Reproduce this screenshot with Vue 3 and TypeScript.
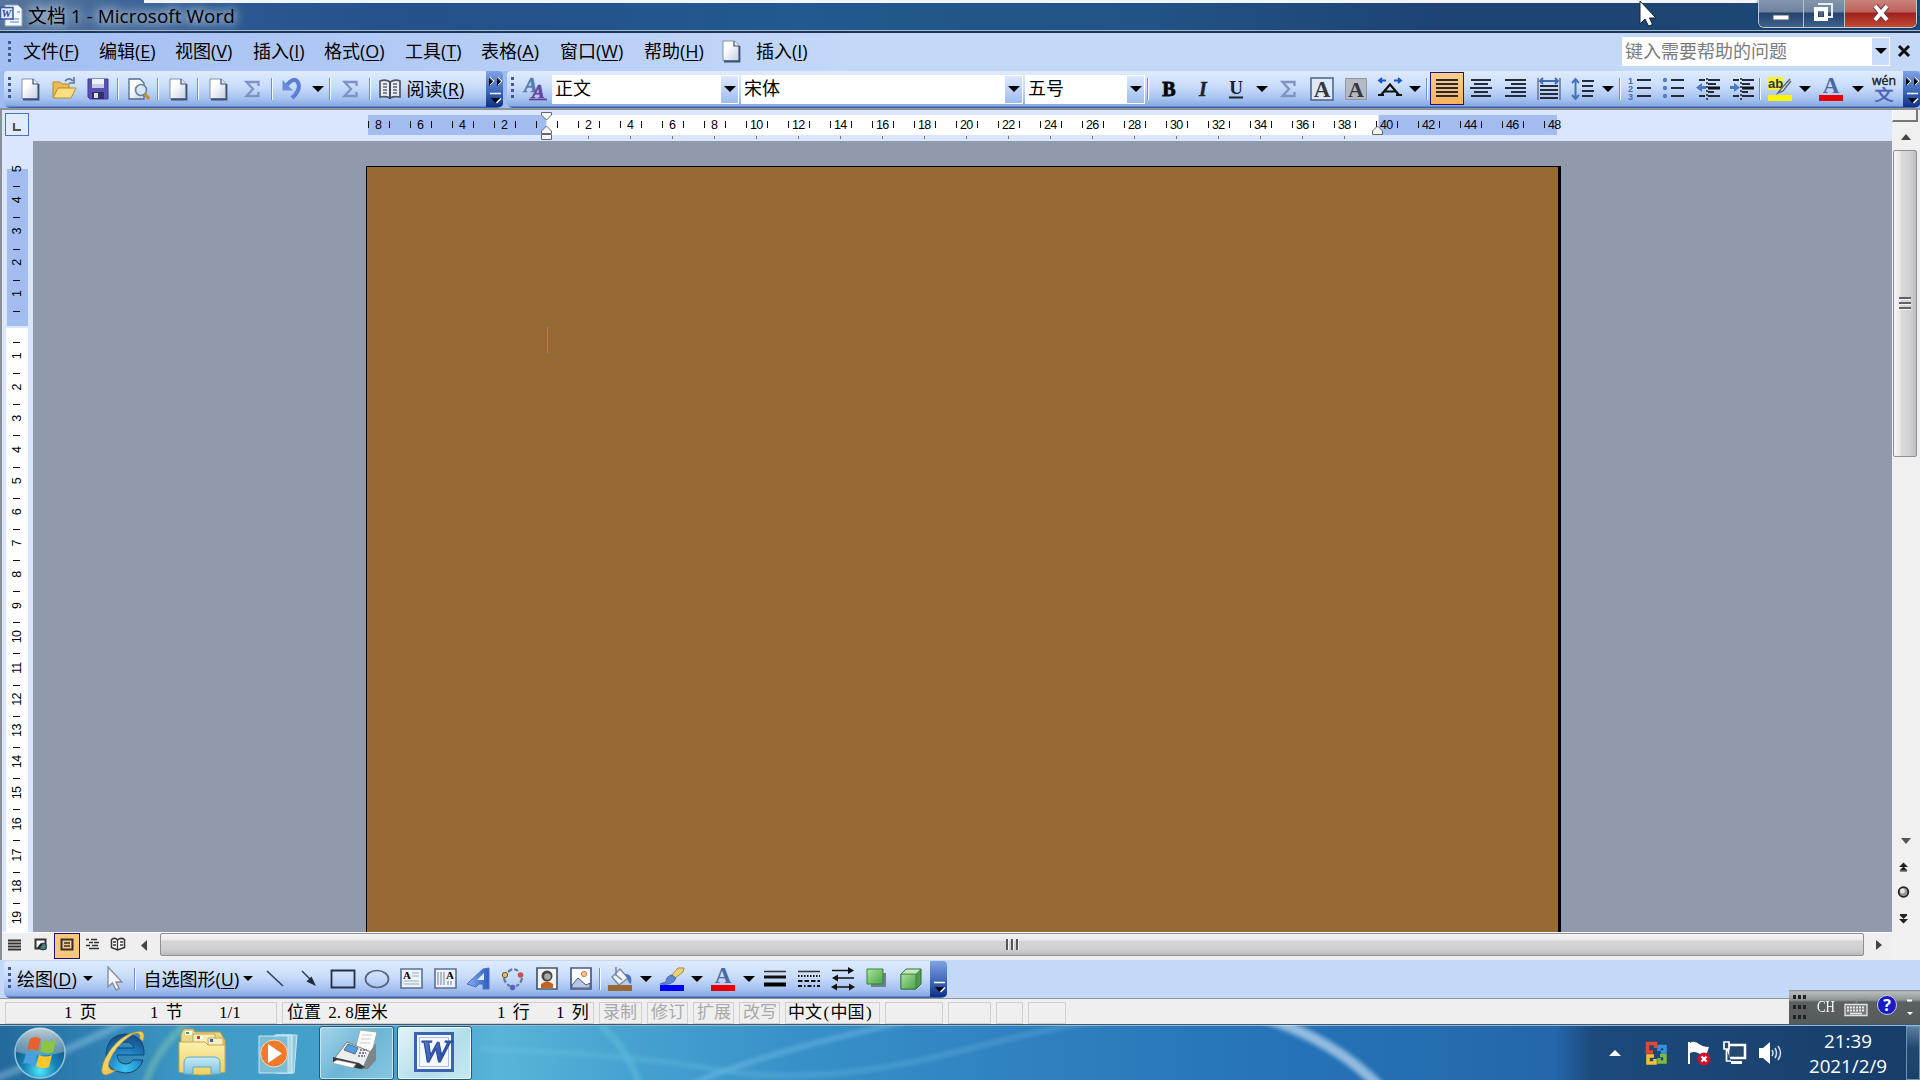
<script setup lang="ts">
interface Item {
  k: 'btn' | 'sep' | 'drop' | 'text' | 'combo' | 'gap'
  icon?: string
  w?: number
  t?: string
  key?: string
  on?: boolean
}

const sigma = '<path d="M18.500 9V5H6.500l6.500 7-6.500 7h12v-4" fill="none" stroke="#7f92c4" stroke-width="2.300"/>'
const page = '<path d="M4 2H15.500L20 6.500V21.500H4Z" fill="url(#paper)" stroke="#8391ad" stroke-width="1"/><path d="M20.500 7V22.500H5" fill="none" stroke="#3c5276" stroke-width="1.800"/><path d="M15 2V7H20" fill="#e4ebf6" stroke="#40506e" stroke-width="1.200"/>'
const rows = (a: number[][]) => a.map(r => `<path d="M${r[0]} ${r[1]}H${r[2]}" stroke="#222a3c" stroke-width="2"/>`).join('')
const serif = 'font-family="Liberation Serif, serif"'

const icons: Record<string, string> = {
  page,
  sigma,
  open: '<path d="M1 21V5H8L10 7H17V11" fill="#e9bd55" stroke="#b98a2c"/><path d="M1 21L6 11H24L19 21Z" fill="#fbdf82" stroke="#b98a2c"/><path d="M13 4Q17 0 21 4M22 0V6H17" fill="none" stroke="#5f7ba5" stroke-width="1.700"/>',
  save: '<path d="M2 2H22V22H4L2 20Z" fill="#5a50b4" stroke="#3b3b90"/><path d="M6 2H18V11H6Z" fill="#eef2fb"/><path d="M6 7H18V11H6Z" fill="#c4cbe4"/><path d="M6 15H18V22H6Z" fill="#2e3268"/><path d="M8 16H12V21H8Z" fill="#dce2f4"/>',
  preview: '<path d="M3 2H14L18 6V22H3Z" fill="url(#paper)" stroke="#54698e" stroke-width="1.300"/><circle cx="15" cy="13" r="5.500" fill="#d8e8f4" stroke="#68819c" stroke-width="1.600"/><path d="M19 17L23 22" stroke="#c98c35" stroke-width="3.500"/>',
  undo: '<path d="M7 8Q13 0 17.500 4.500Q22 12 12 21" fill="none" stroke="#5c7fd4" stroke-width="4"/><path d="M2.500 3V13.500H13Z" fill="#6b8cdb"/>',
  book: '<path d="M2 4Q8 2 12 5Q17 2 22 4V20Q16 19 12 21Q8 19 2 20Z" fill="#e8ebef" stroke="#4e5663" stroke-width="1.700"/><path d="M12 5V22" stroke="#3e4858" stroke-width="2"/><path d="M5 7H9M5 10H9M5 13H9M5 16H9M15 7H19M15 10H19M15 13H19M15 16H19" stroke="#5d6675" stroke-width="1.400"/>',
  styles: `<g font-weight="bold" font-style="italic" ${serif}><text x="1" y="15" font-size="20" fill="#567bb0" stroke="#567bb0" stroke-width=".6">A</text><text x="9" y="20.500" font-size="19" fill="#67459e" stroke="#67459e" stroke-width=".6">A</text></g><path d="M6 22.500H24" stroke="#67459e" stroke-width="1.800"/>`,
  bold: `<text x="13" y="18.500" text-anchor="middle" font-size="20" font-weight="bold" ${serif} stroke="#111" stroke-width=".9">B</text>`,
  italic: `<text x="13" y="18.500" text-anchor="middle" font-size="20" font-weight="bold" font-style="italic" ${serif} fill="#1b2333" stroke="#1b2333" stroke-width=".4">I</text>`,
  under: `<text x="12" y="17" text-anchor="middle" font-size="19" font-weight="bold" ${serif} fill="#1b2333">U</text><path d="M5 20.500H19" stroke="#1b2333" stroke-width="2"/>`,
  boxA: `<path d="M1 1H23V23H1Z" fill="#dde8f8" stroke="#4a6285" stroke-width="1.500"/><text x="12" y="20" text-anchor="middle" font-size="23" font-weight="bold" ${serif} fill="#34383f">A</text>`,
  shadeA: `<path d="M1.500 1.500H22.500V22.500H1.500Z" fill="#b5b9c1" stroke="#92969e"/><text x="12" y="20" text-anchor="middle" font-size="22" font-weight="bold" ${serif} fill="#34383f">A</text>`,
  scale: '<path d="M2 3.500H8M22 3.500H16M4 1L1 3.500L4 6M20 1L23 3.500L20 6" fill="none" stroke="#1655c8" stroke-width="1.800"/><path d="M3 18L12 7.500L21 18M6 14.500H18M0 18H6M18 18H24" fill="none" stroke="#111" stroke-width="2.200"/>',
  justify: rows([[1, 3, 23], [1, 7, 23], [1, 11, 23], [1, 15, 23], [1, 19, 23]]),
  center: rows([[2, 3, 22], [5, 7, 19], [1, 11, 23], [5, 15, 19], [2, 19, 22]]),
  right: rows([[2, 3, 23], [8, 7, 23], [2, 11, 23], [8, 15, 23], [2, 19, 23]]),
  dist: rows([[3, 9, 21], [3, 13, 21], [3, 17, 21], [3, 21, 21]]) + '<path d="M1 1V23M23 1V23" stroke="#657694" stroke-width="1.500"/><path d="M3 4H21M6 1L3 4L6 7M18 1L21 4L18 7" fill="none" stroke="#3f6bb9" stroke-width="2"/>',
  spacing: rows([[11, 4, 23], [11, 9, 22], [11, 14, 23], [11, 19, 22]]) + '<path d="M4.500 2V22M1 6L4.500 2L8 6M1 18L4.500 22L8 18" fill="none" stroke="#4773bd" stroke-width="2"/>',
  number: rows([[9, 3, 23], [9, 11, 23], [9, 19, 23]]) + '<g font-family="Liberation Sans, sans-serif" font-size="9" font-weight="bold" fill="#4c6cb0"><text x="0" y="7">1</text><text x="0" y="15">2</text><text x="0" y="23">3</text></g>',
  bullet: rows([[9, 3, 22], [9, 11, 22], [9, 19, 22]]) + '<g fill="#5a7cbc"><circle cx="3" cy="3" r="2.200"/><circle cx="3" cy="11" r="2.200"/><circle cx="3" cy="19" r="2.200"/></g>',
  outdent: rows([[3, 3, 9], [12, 3, 24], [12, 7, 20], [12, 15, 18], [3, 19, 9], [12, 19, 24]]) + '<path d="M12 11H24" stroke="#111" stroke-width="3"/><path d="M11 1V23" stroke="#222" stroke-width="1.500" stroke-dasharray="2 2"/><path d="M0 10.500L6 6V9H10V12H6V15Z" fill="#4b78c8"/>',
  indent: rows([[3, 3, 9], [12, 3, 24], [12, 7, 20], [12, 15, 18], [3, 19, 9], [12, 19, 24]]) + '<path d="M12 11H24" stroke="#111" stroke-width="3"/><path d="M11 1V23" stroke="#222" stroke-width="1.500" stroke-dasharray="2 2"/><path d="M10 10.500L4 6V9H0V12H4V15Z" fill="#4b78c8"/>',
  hilite: '<path d="M0 0H15V13H0Z" fill="#f2f23d"/><text x="0" y="11" font-size="13" font-family="Liberation Sans, sans-serif" font-weight="bold" fill="#333">ab</text><path d="M22 2L13 12L10 16L15 14L23 4" fill="#e8e8e8" stroke="#5d6674" stroke-width="1.500"/><path d="M0 18H24V24H0Z" fill="#fff500"/>',
  fontcolor: `<text x="12" y="16" text-anchor="middle" font-size="23" font-weight="bold" ${serif} fill="#48689e">A</text><path d="M0 18H24V24H0Z" fill="#e60000"/>`,
  pinyin: '<text x="12" y="8" text-anchor="middle" font-size="12" font-family="Open Sans, sans-serif" fill="#222" stroke="#222" stroke-width=".4" textLength="24" lengthAdjust="spacingAndGlyphs">wén</text><text x="12" y="22.500" text-anchor="middle" font-size="15" font-family="Noto Sans CJK SC, sans-serif" fill="#4b62b8" stroke="#4b62b8" stroke-width=".6" textLength="19" lengthAdjust="spacingAndGlyphs">文</text>',
  cursor: '<path d="M6 0V20L10.500 16L14 23L17 21.500L14 15H20Z" fill="#f3f4f7" stroke="#858da0" stroke-width="1.400"/>',
  line: '<path d="M4 4L20 19" stroke="#31435e" stroke-width="1.700"/>',
  arrow: '<path d="M5 4L15 14" stroke="#31435e" stroke-width="1.500"/><path d="M19 19L9.500 14.500L14.500 9.500Z" fill="#222c3e"/>',
  rect: '<path d="M.5 3.500H23.500V20.500H.5Z" fill="none" stroke="#223048" stroke-width="1.800"/>',
  oval: '<ellipse cx="12" cy="12" rx="11.500" ry="8.500" fill="none" stroke="#56647c" stroke-width="1.700"/>',
  textbox: `<path d="M2 2H23V21H2Z" fill="#eef3fb" stroke="#5b7193" stroke-width="1.600"/><text x="4" y="12" font-size="11" font-weight="bold" ${serif}>A</text><path d="M13 6H20M13 9H20M5 14H20M5 17H20" stroke="#98a9c4" stroke-width="1.200"/>`,
  vtext: `<path d="M2 2H23V21H2Z" fill="#eef3fb" stroke="#5b7193" stroke-width="1.600"/><text x="13" y="12" font-size="11" font-weight="bold" ${serif}>A</text><path d="M5 5V18M8 5V18M11 5V18M15 14V18M18 14V18" stroke="#8395b3" stroke-width="1.200"/>`,
  wordart: '<path d="M0 17L16 2L22 1V22H16V17H12L9 20Z" fill="url(#blueA)" stroke="#4a6fc0"/><path d="M17 6L10 13H17Z" fill="#dfe9fb"/>',
  diagram: '<path d="M7 5Q12 0 17 4M21 11Q20 17 15 19M3 11Q4 17 9 19" fill="none" stroke="#62799b" stroke-width="2.200" stroke-dasharray="5 2"/><circle cx="4" cy="8" r="2.700" fill="#d3be5b" stroke="#67613f"/><circle cx="19.500" cy="8" r="2.800" fill="#c95050"/><circle cx="11.500" cy="20.500" r="2.800" fill="#5963c4"/>',
  clipart: '<path d="M2 1H22V22H2Z" fill="#f3f3f3" stroke="#455875" stroke-width="1.700"/><circle cx="12" cy="9" r="5.500" fill="#444"/><circle cx="12.500" cy="9.500" r="3.300" fill="#aaa"/><path d="M6 21V17Q12 12 18 17V21Z" fill="#c4611d"/>',
  picture: '<path d="M2 1H22V22H2Z" fill="#fafcff" stroke="#455c83" stroke-width="1.700"/><circle cx="15" cy="7" r="2.600" fill="#ffc28c" stroke="#df7b36"/><path d="M3 18L9 11L17 18L21 16V21H3Z" fill="#b9c6e4" stroke="#45587a"/>',
  bucket: '<path d="M4 10L12 2L20 11L11 18Z" fill="#f0f4fa" stroke="#7887a2" stroke-width="1.400"/><path d="M8 9V0M8 8L14 13" stroke="#7887a2" stroke-width="1.500"/><path d="M17 7Q25 6 23 17Q20 16 19 11Z" fill="#4e75ba"/><path d="M0 18H24V24H0Z" fill="#976933"/>',
  brush: '<path d="M24 1L18 1L11 9L14 12L23 5Z" fill="#f0d070" stroke="#a88a44"/><path d="M12 8Q6 9 6 15L0 17Q13 19 16 11Z" fill="#5e86ce" stroke="#466bb0"/><path d="M0 18H24V24H0Z" fill="#0000f2"/>',
  weight: '<path d="M1 4.500H23" stroke="#333" stroke-width="1.500"/><path d="M1 10H23" stroke="#111" stroke-width="3"/><path d="M1 17.500H23" stroke="#000" stroke-width="4"/>',
  dash: '<path d="M1 4.500H23" stroke="#333" stroke-width="1.500"/><path d="M1 9H23" stroke="#111" stroke-width="2" stroke-dasharray="1.500 1.500"/><path d="M1 14H23" stroke="#111" stroke-width="2" stroke-dasharray="4.500 2"/><path d="M1 19H23" stroke="#111" stroke-width="2" stroke-dasharray="4 2 1.500 2"/>',
  arrows: '<path d="M1 3.500H21M4 11H23M3 20H21" stroke="#111" stroke-width="1.500"/><path d="M23 3.500L17 0V7ZM1 11L7 7.500V14.500ZM0 20L6 16.500V23.500ZM24 20L18 16.500V23.500Z" fill="#111"/>',
  shadow: '<path d="M6 6H21V20H6Z" fill="#6f8190"/><path d="M2 2H18V17H2Z" fill="url(#green)" stroke="#36833b"/>',
  cube: '<path d="M2 7L7 2H22V17L17 22H2Z" fill="#4e9c50" stroke="#356f3a"/><path d="M2 7H17V22H2Z" fill="url(#green)" stroke="#3c7c40"/><path d="M3 6.500L7 2.500H21L17 6.500Z" fill="#c7e8b9"/>',
}

const standard: Item[] = [
  { k: 'btn', icon: 'page' }, { k: 'btn', icon: 'open' }, { k: 'btn', icon: 'save' }, { k: 'sep' },
  { k: 'btn', icon: 'preview' }, { k: 'sep' }, { k: 'btn', icon: 'page' }, { k: 'sep' },
  { k: 'btn', icon: 'page' }, { k: 'btn', icon: 'sigma' }, { k: 'sep' },
  { k: 'btn', icon: 'undo' }, { k: 'drop' }, { k: 'sep' }, { k: 'btn', icon: 'sigma' }, { k: 'sep' },
  { k: 'btn', icon: 'book' }, { k: 'text', t: '阅读', key: 'R', w: 78 },
]
const format: Item[] = [
  { k: 'gap', w: 1 }, { k: 'btn', icon: 'styles' }, { k: 'combo', t: '正文', w: 187 }, { k: 'gap', w: 2 },
  { k: 'combo', t: '宋体', w: 282 }, { k: 'gap', w: 2 }, { k: 'combo', t: '五号', w: 120 }, { k: 'sep' },
  { k: 'btn', icon: 'bold' }, { k: 'btn', icon: 'italic' }, { k: 'btn', icon: 'under' }, { k: 'drop' },
  { k: 'btn', icon: 'sigma' }, { k: 'btn', icon: 'boxA' }, { k: 'btn', icon: 'shadeA' }, { k: 'btn', icon: 'scale' },
  { k: 'drop' }, { k: 'sep' }, { k: 'btn', icon: 'justify', on: true }, { k: 'btn', icon: 'center' },
  { k: 'btn', icon: 'right' }, { k: 'btn', icon: 'dist' }, { k: 'btn', icon: 'spacing' }, { k: 'gap', w: -1 }, { k: 'drop' }, { k: 'sep' },
  { k: 'btn', icon: 'number' }, { k: 'btn', icon: 'bullet' }, { k: 'btn', icon: 'outdent' }, { k: 'btn', icon: 'indent' },
  { k: 'gap', w: -2 }, { k: 'sep' }, { k: 'btn', icon: 'hilite' }, { k: 'drop' }, { k: 'btn', icon: 'fontcolor' }, { k: 'gap', w: 1 }, { k: 'drop' },
  { k: 'btn', icon: 'pinyin' },
]
const drawing: Item[] = [
  { k: 'text', t: '绘图', key: 'D', w: 62 }, { k: 'drop' }, { k: 'btn', icon: 'cursor' }, { k: 'gap', w: 1 }, { k: 'sep' }, { k: 'gap', w: 6 },
  { k: 'text', t: '自选图形', key: 'U', w: 96 }, { k: 'drop' }, { k: 'gap', w: 1 },
  { k: 'btn', icon: 'line' }, { k: 'btn', icon: 'arrow' }, { k: 'btn', icon: 'rect' }, { k: 'btn', icon: 'oval' },
  { k: 'btn', icon: 'textbox' }, { k: 'btn', icon: 'vtext' }, { k: 'btn', icon: 'wordart' }, { k: 'btn', icon: 'diagram' },
  { k: 'btn', icon: 'clipart' }, { k: 'btn', icon: 'picture' }, { k: 'gap', w: -1 }, { k: 'sep' }, { k: 'btn', icon: 'bucket' }, { k: 'drop' },
  { k: 'btn', icon: 'brush' }, { k: 'drop' }, { k: 'btn', icon: 'fontcolor' }, { k: 'drop' },
  { k: 'btn', icon: 'weight' }, { k: 'btn', icon: 'dash' }, { k: 'btn', icon: 'arrows' }, { k: 'btn', icon: 'shadow' }, { k: 'btn', icon: 'cube' },
]
const bars = { standard, format }

const menus = [
  { t: '文件', key: 'F', w: 76 }, { t: '编辑', key: 'E', w: 76 }, { t: '视图', key: 'V', w: 78 },
  { t: '插入', key: 'I', w: 71 }, { t: '格式', key: 'O', w: 81 }, { t: '工具', key: 'T', w: 76 },
  { t: '表格', key: 'A', w: 79 }, { t: '窗口', key: 'W', w: 84 }, { t: '帮助', key: 'H', w: 75 },
]

const unit = 21
const zeroX = 546.300
const hLabels: { x: number; n: number }[] = []
for (let n = -8; n <= 48; n += 2) if (n !== 0) hLabels.push({ x: zeroX + n * unit, n: Math.abs(n) })
const hTicks: number[] = []
for (let n = -9; n < 48; n++) if (n + 0.5 > -8.6) hTicks.push(Math.floor(zeroX + 0.5 + (n + 0.5) * unit) + 0.5)
const tabTicks = Array.from({ length: 19 }, (_, i) => Math.floor(zeroX + (i + 1) * 2 * unit) + 0.5)

const vLabels: { y: number; n: number }[] = []
for (let n = -5; n <= 19; n++) if (n !== 0) vLabels.push({ y: 184 + n * 31.2, n: Math.abs(n) })
const vTicks: number[] = []
for (let n = -5; n < 19; n++) vTicks.push(Math.floor(185.900 + (n + 0.5) * 31.15) + 0.5)
</script>

<template>
  <div class="screen">
    <svg class="defs" width="0" height="0">
      <defs>
        <linearGradient id="paper" x2="1" y2="1"><stop offset=".3" stop-color="#fff" /><stop offset="1" stop-color="#c3cee2" /></linearGradient>
        <linearGradient id="blueA" x2="1"><stop stop-color="#86b2f2" /><stop offset="1" stop-color="#2c5cc0" /></linearGradient>
        <linearGradient id="green" x2="1" y2="1"><stop stop-color="#b0e29c" /><stop offset="1" stop-color="#46a44b" /></linearGradient>
        <radialGradient id="orb" cy=".85" r=".8"><stop stop-color="#4fe6ff" /><stop offset=".4" stop-color="#1685b8" /><stop offset="1" stop-color="#123f66" /></radialGradient>
        <linearGradient id="gloss" x2="0" y2="1"><stop stop-color="#fff" stop-opacity=".75" /><stop offset="1" stop-color="#bcd0de" stop-opacity=".35" /></linearGradient>
        <radialGradient id="ie" cy=".9" r=".9"><stop stop-color="#3cc6f4" /><stop offset=".6" stop-color="#1a7ac0" /><stop offset="1" stop-color="#174a80" /></radialGradient>
        <linearGradient id="folder" x2="0" y2="1"><stop stop-color="#fbf0ae" /><stop offset="1" stop-color="#ecd261" /></linearGradient>
        <linearGradient id="glass" x2="0" y2="1"><stop stop-color="#c7e9f6" /><stop offset="1" stop-color="#7fc3e2" /></linearGradient>
        <linearGradient id="ring" x2="1" y2="1"><stop stop-color="#f8f0a0" /><stop offset="1" stop-color="#e3a417" /></linearGradient>
        <linearGradient id="wblue" x2="1" y2="1"><stop stop-color="#5d86d2" /><stop offset="1" stop-color="#1d3c92" /></linearGradient>
      </defs>
    </svg>

    <header class="title">
      <svg class="app-icon" viewBox="0 0 24 24"><path d="M5 1H18L22 5V22H5Z" fill="#f5f8fd" stroke="#8fa0bb" /><path d="M17 8H20M10 15H19M10 18H19" stroke="#8daad8" stroke-width="1.500" /><path d="M.5 3.500H13V15H.5Z" fill="#dfe8f8" stroke="#375aa5" stroke-width="1.500" /><text x="6.500" y="13" text-anchor="middle" font-size="11" font-weight="bold" font-style="italic" font-family="Liberation Serif, serif" fill="#274c9c">W</text></svg>
      <span class="title-text">文档 1 - Microsoft Word</span>
      <div class="strip"></div>
      <div class="caption">
        <span class="cap min"><svg viewBox="0 0 44 26"><path d="M14 15H30V20H14Z" fill="#fff" stroke="#465a74" /></svg></span>
        <span class="cap max"><svg viewBox="0 0 40 26"><path d="M14 4H28V17H24" fill="none" stroke="#e8edf3" stroke-width="2" /><path d="M12 9H22V19H12Z" fill="none" stroke="#fff" stroke-width="4" /><path d="M15 12H19V16H15Z" fill="#52637c" /></svg></span>
        <span class="cap close"><svg viewBox="0 0 72 26"><path d="M30 6L42 20M42 6L30 20" stroke="#6a3b42" stroke-width="6" /><path d="M30 6L42 20M42 6L30 20" stroke="#fff" stroke-width="4" /></svg></span>
      </div>
    </header>

    <nav class="menu">
      <i class="grip"></i>
      <span v-for="m in menus" :key="m.key" class="menu-item" :style="{ width: m.w + 'px' }">{{ m.t }}(<u>{{ m.key }}</u>)</span>
      <svg class="menu-page" viewBox="0 0 24 24" v-html="icons.page"></svg>
      <span class="menu-item">插入(<u>I</u>)</span>
      <div class="ask"><span>键入需要帮助的问题</span><b class="ask-drop"><i class="tri"></i></b></div>
      <svg class="menu-x" viewBox="0 0 14 12"><path d="M2 1L12 11M12 1L2 11" stroke="#111" stroke-width="3" /></svg>
    </nav>

    <div class="bars">
      <section v-for="(items, name) in bars" :key="name" :class="['bar', name]">
        <i class="grip"></i>
        <template v-for="(it, i) in items" :key="i">
          <span v-if="it.k === 'btn'" :class="['btn', { on: it.on }]"><svg viewBox="0 0 24 24" v-html="icons[it.icon!]"></svg></span>
          <i v-else-if="it.k === 'sep'" class="sep"></i>
          <span v-else-if="it.k === 'drop'" class="drop"><i class="tri"></i></span>
          <i v-else-if="it.k === 'gap'" :style="{ marginLeft: it.w + 'px' }"></i>
          <span v-else-if="it.k === 'combo'" class="combo" :style="{ width: it.w + 'px' }"><span>{{ it.t }}</span><b><i class="tri"></i></b></span>
          <span v-else class="label" :style="{ width: it.w + 'px' }">{{ it.t }}(<u>{{ it.key }}</u>)</span>
        </template>
        <span class="end">
          <svg viewBox="0 0 17 36"><path d="M3 7L7 11L3 15ZM11 7L15 11L11 15Z" fill="#000" /><path d="M4 6L8 10L4 14M12 6L16 10L12 14" stroke="#fff" stroke-width="1" fill="none" /><path d="M4 22.500H15" stroke="#fff" stroke-width="1.500" /><path d="M5 27H14L9.500 32Z" fill="#000" /><path d="M15 27.500L10.500 32" stroke="#fff" stroke-width="1.500" /></svg>
        </span>
      </section>
    </div>

    <main class="work">
      <div class="hrow">
        <svg class="hruler" width="1890" height="31">
          <rect x="3.500" y="3.500" width="23" height="22" fill="#e2ebfb" stroke="#4a71bd" />
          <path d="M12 12V19H19" transform="translate(0 1)" fill="none" stroke="#555" stroke-width="2.200" />
          <rect x="366" y="5" width="178" height="20" fill="#a3bdf1" />
          <rect x="545" y="5" width="831" height="20" fill="#fff" />
          <rect x="1377" y="5" width="178" height="20" fill="#a3bdf1" />
          <g transform="translate(-2 0)">
            <path v-for="x in hTicks" :key="x" :d="`M${x} 11V18`" stroke="#111" />
            <path v-for="x in tabTicks" :key="x" :d="`M${x} 26V29`" stroke="#777" />
            <text v-for="l in hLabels" :key="l.x" :x="l.x" y="19" text-anchor="middle" class="num">{{ l.n }}</text>
            <path d="M541.500 2.500H551.500V5L546.500 10L541.500 5Z" fill="#f6f6f6" stroke="#666" />
            <path d="M541.500 23.500V21L546.500 16L551.500 21V23.500ZM541.500 24.500H551.500V29.500H541.500Z" fill="#f6f6f6" stroke="#666" />
            <path d="M1372.500 24.500V21L1377.500 16L1382.500 21V24.500Z" fill="#f6f6f6" stroke="#666" />
          </g>
        </svg>
      </div>
      <div class="mid">
        <svg class="vruler" width="31" height="791">
          <rect x="5" y="28" width="21" height="157" fill="#a3bdf1" />
          <rect x="4" y="187" width="22" height="604" fill="#fff" />
          <path v-for="y in vTicks" :key="y" :d="`M11 ${y}H18`" stroke="#111" />
          <text v-for="l in vLabels" :key="l.y" :transform="`translate(19 ${l.y}) rotate(-90)`" text-anchor="middle" class="num">{{ l.n }}</text>
        </svg>
        <div class="canvas"><div class="paper"><i class="caret"></i></div></div>
      </div>
      <div class="hscroll">
        <svg class="views" width="131" height="27">
          <path d="M6 7.500H19M6 10.500H19M6 13.500H19M6 16.500H19" stroke="#333" stroke-width="1.900" />
          <path d="M33.500 6.500H43.500V15.500H33.500Z" fill="#fff" stroke="#333" stroke-width="2" /><circle cx="41" cy="13.500" r="3.500" fill="#477f73" stroke="#1f2f63" /><path d="M36 15L40 11" stroke="#222" stroke-width="2" />
          <rect x="52.500" y=".5" width="25" height="25" fill="#fcc77d" stroke="#17107d" /><path d="M59.500 6.500H70.500V16.500H59.500Z" fill="none" stroke="#333" stroke-width="2" /><path d="M62 10H68M62 13H68" stroke="#333" stroke-width="1.500" />
          <path d="M84 6.500H87M89 6.500H95M87 9.500H91M92 9.500H97M84 12.500H88M90 12.500H96M87 15.500H97" stroke="#333" stroke-width="1.700" />
          <path d="M109.500 6.500Q113 4 115.500 7Q119 4 122.500 6.500V14.500L115.500 17L109.500 14.500Z" fill="#fff" stroke="#333" stroke-width="1.500" /><path d="M115.500 7V17M111 9H114M111 12H114M118 9H121M118 12H121" stroke="#333" stroke-width="1.300" />
          <path d="M145 7V18L139 12.500Z" fill="#444" />
        </svg>
        <span class="harrow l"></span>
        <span class="hthumb"><i v-for="n in 3" :key="n"></i></span>
        <span class="harrow"><i class="rarr"></i></span>
      </div>
      <aside class="vscroll">
        <i class="split"></i>
        <span class="varrow"><i class="uarr"></i></span>
        <span class="vthumb"><i v-for="n in 3" :key="n"></i></span>
        <span class="varrow d"><i class="darr"></i></span>
        <svg width="28" height="107">
          <path d="M11.500 9.500L16 14H7ZM11.500 13.500L15.500 17.500H7.500Z" fill="#222" /><path d="M8 18H15" stroke="#222" />
          <circle cx="11.500" cy="39" r="4.800" fill="#999" stroke="#222" stroke-width="1.800" /><circle cx="10.500" cy="38" r="2.400" fill="#e6e6e6" />
          <path d="M7.500 62H15.500L11.500 66ZM7 66H16L11.500 70.500Z" fill="#222" /><path d="M8 61.500H15" stroke="#222" />
        </svg>
      </aside>
    </main>

    <div class="drawrow">
      <section class="bar drawing">
        <i class="grip"></i>
        <template v-for="(it, i) in drawing" :key="i">
          <span v-if="it.k === 'btn'" class="btn"><svg viewBox="0 0 24 24" v-html="icons[it.icon!]"></svg></span>
          <i v-else-if="it.k === 'sep'" class="sep"></i>
          <span v-else-if="it.k === 'drop'" class="drop"><i class="tri"></i></span>
          <i v-else-if="it.k === 'gap'" :style="{ marginLeft: it.w + 'px' }"></i>
          <span v-else class="label" :style="{ width: it.w + 'px' }">{{ it.t }}(<u>{{ it.key }}</u>)</span>
        </template>
        <span class="end"><svg viewBox="0 0 17 36"><path d="M4 21.500H15" stroke="#fff" stroke-width="1.500" /><path d="M5 26H14L9.500 31Z" fill="#000" /><path d="M15 26.500L10.500 31" stroke="#fff" stroke-width="1.500" /></svg></span>
      </section>
    </div>

    <footer class="status">
      <span class="cell c1"><em class="p1">1 页</em><em class="p2">1 节</em><em class="p3">1/1</em></span>
      <span class="cell c2"><em class="q1">位置 2<s>.</s>8厘米</em><em class="q2">1 行</em><em class="q3">1 列</em></span>
      <span class="cell c3 dim">录制</span><span class="cell c4 dim">修订</span><span class="cell c4 dim">扩展</span><span class="cell c4 dim">改写</span>
      <span class="cell c5">中文<s>(</s>中国<s>)</s></span>
      <span class="cell c6"></span><span class="cell c7"></span><span class="cell c8"></span><span class="cell c9"></span>
    </footer>

    <div class="lang">
      <i class="dots"></i>
      <span class="ch">CH</span>
      <svg class="kbd" viewBox="0 0 24 20"><path d="M12 6Q13 2 17 3T22 0" fill="none" stroke="#8c9094" /><path d="M1 7.500H23V18.500H1Z" fill="#777b7c" stroke="#dfe3e4" stroke-width="1.300" /><path d="M3 10.500H21M3 13.500H21" stroke="#e9eded" stroke-width="2" stroke-dasharray="2 1" /><path d="M6 16.500H18" stroke="#e9eded" stroke-width="1.500" /></svg>
      <span class="help">?</span>
      <svg class="lend" viewBox="0 0 8 20"><path d="M1 3.500H6" stroke="#fff" stroke-width="2" /><path d="M1 15H7L4 18Z" fill="#fff" /></svg>
    </div>

    <div class="taskbar">
      <svg class="wall" width="1920" height="55">
        <g fill="none" filter="blur(2px)" opacity=".55">
          <path d="M-10 55Q60 30 130 -5" stroke="#a6d4ee" stroke-width="8" opacity=".7" />
          <path d="M145 60Q155 25 190 -5" stroke="#a8e4a8" stroke-width="7" opacity=".6" />
          <path d="M480 24Q620 28 720 45T960 26T1100 0" stroke="#7fd0ea" stroke-width="5" opacity=".5" />
          <path d="M690 60Q760 28 905 -3" stroke="#8ecdf0" stroke-width="5" opacity=".7" />
          <path d="M600 0Q625 20 640 60" stroke="#73d0e4" stroke-width="7" opacity=".6" />
          <path d="M1262 -8Q1335 15 1380 62" stroke="#cdeaff" stroke-width="11" />
          <path d="M1266 -7Q1335 17 1376 60" stroke="#f4fbff" stroke-width="6" />
        </g>
      </svg>
      <svg class="ic start" viewBox="0 0 54 54"><circle cx="27" cy="27" r="25" fill="url(#orb)" stroke="#93c5de" stroke-width="1.500" /><path d="M3 26A24 24 0 0 1 51 26Q27 33 3 26Z" fill="url(#gloss)" /><path d="M17 13Q22 9 28 13L25 25Q20 22 14 24Z" fill="#e8602c" /><path d="M30 14Q36 17 43 14L40 26Q34 29 27 25Z" fill="#8cc63e" /><path d="M13 27Q19 24 24 28L21 40Q16 36 10 38Z" fill="#4a9fe0" /><path d="M26 29Q33 32 39 29L36 41Q29 44 23 40Z" fill="#fbc62d" /></svg>
      <svg class="ic iesvg" viewBox="0 0 54 54"><path d="M47 29H20Q21 38 29 38Q34 38 36 34H46Q42 47 28 47Q9 46 9 28Q10 9 28 8Q48 9 47 29ZM20 22H37Q35 16 28.500 16Q22 16 20 22Z" fill="url(#ie)" stroke="#124770" /><path d="M46 15Q50 3 39 6Q20 10 8 33Q1 49 9 49Q14 48 19 44Q10 46 12 36Q18 20 33 10Q44 3 43 13Z" fill="url(#ring)" stroke="#c58d1a" stroke-width=".6" /></svg>
      <svg class="ic folder" viewBox="0 0 54 54"><path d="M6 8L9 3H18L20 6H45L50 14V46H6Z" fill="#e9d68b" stroke="#b99b46" /><path d="M10 5H17V9H10Z" fill="#fff" /><path d="M11 6H14V8H11Z" fill="#34a853" /><path d="M18 8H40V20H18Z" fill="#f7edbd" stroke="#c2a759" /><path d="M21 10H28V13H21Z" fill="#fff" /><path d="M22 10H25V13H22Z" fill="#d33" /><path d="M33 12H48V20H33Z" fill="#f7edbd" stroke="#c2a759" /><path d="M35 13H38V16H35Z" fill="#36a" /><path d="M4 16H30L33 19H50V46Q27 52 4 46Z" fill="url(#folder)" stroke="#c4a74b" /><path d="M9 48V37Q9 31 15 31H39Q45 31 45 37V48H36V41H18V48Z" fill="url(#glass)" stroke="#5fa8c8" /></svg>
      <svg class="ic wmp" viewBox="0 0 54 54"><path d="M27 9H47L44 47H27Z" fill="#8fc7dd" stroke="#c8e8f2" /><path d="M25 9H42V47H25Z" fill="#a9d7e6" stroke="#d6eef5" /><path d="M9 10H38V47H9Z" fill="#7bbdd6" stroke="#c7e7f0" /><circle cx="24" cy="27.500" r="13.500" fill="#f07a2a" stroke="#f7dac5" stroke-width="1" /><path d="M18 18V37L32 27.500Z" fill="#fff" /></svg>
      <span class="task"><svg viewBox="0 0 54 54"><path d="M31 5L48 7L43 28H25Z" fill="#fbfbfb" stroke="#9ea4a8" /><path d="M33 10H43M32 14H42M31 18H41" stroke="#c8ccd0" /><path d="M8 30L18 17L42 27L43 38L33 44L4 36Z" fill="#eceeee" stroke="#7c8387" /><path d="M40 28L47 18V35L39 44L33 44Z" fill="#7e868b" /><path d="M19 19L29 23L26 29L15 25Z" fill="#4aa3e0" stroke="#667" /><path d="M31 25H38M30 28H37M29 31H36" stroke="#667" stroke-width="1.500" stroke-dasharray="2 1" /><path d="M4 32L30 38L36 42L32 44L4 38Z" fill="#333a3e" /><path d="M3 38L8 35L27 39L24 43Z" fill="#fff" stroke="#999" stroke-width=".6" /></svg></span>
      <span class="task active"><svg viewBox="0 0 54 54"><path d="M8.500 8.500H45.500V45.500H8.500Z" fill="#f4f7fd" stroke="#3b62b4" stroke-width="3" /><path d="M12.500 12.500H41.500V41.500H12.500Z" fill="none" stroke="#a9bfe8" /><text x="28" y="37" text-anchor="middle" font-size="32" textLength="31" lengthAdjust="spacingAndGlyphs" font-weight="bold" font-style="italic" font-family="Liberation Serif, serif" fill="url(#wblue)" stroke="#2a4a9c" stroke-width="1">W</text></svg></span>
      <div class="tray">
        <svg class="t-up" viewBox="0 0 12 8"><path d="M6 1L12 7H0Z" fill="#fff" /></svg>
        <svg class="t-off" viewBox="0 0 24 26"><g fill="none" stroke-width="3.500"><path d="M9 12H3.500V3.500H11.500V8" stroke="#e04a32" /><path d="M15 11V6.500H21V12H17" stroke="#3b8fdd" /><path d="M10 16H4V23H11V19" stroke="#f6c22c" /><path d="M15 18V22H21V15.500H16" stroke="#7bbd3e" /></g></svg>
        <svg class="t-flag" viewBox="0 0 24 26"><path d="M2 2V24" stroke="#fff" stroke-width="2" /><path d="M3 3Q7 0 12 4Q16 7 22 7L19 16Q14 15 11 13Q7 11 3 13Z" fill="#fff" /><circle cx="17" cy="19" r="6.500" fill="#d0142c" /><path d="M14.500 16.500L19.500 21.500M19.500 16.500L14.500 21.500" stroke="#fff" stroke-width="2" /></svg>
        <svg class="t-net" viewBox="0 0 24 26"><path d="M5 5H22V18H5Z" fill="#26496f" stroke="#fff" stroke-width="2.500" /><path d="M1 2H6V9H1ZM3.500 9V21H8" fill="#26496f" stroke="#fff" stroke-width="1.700" /><path d="M8 22.500H19" stroke="#fff" stroke-width="3" /></svg>
        <svg class="t-snd" viewBox="0 0 24 26"><path d="M1 8H5L12 2V24L5 18H1Z" fill="#fff" /><path d="M14 10Q16 13 14 16M17 8Q20 13 17 18M20 6Q25 13 20 20" stroke="#d3dfec" stroke-width="1.500" fill="none" /></svg>
        <div class="clock"><span>21:39</span><span>2021/2/9</span></div>
        <i class="peek"></i>
      </div>
    </div>

    <svg class="mouse" width="20" height="28" viewBox="0 0 20 28"><path d="M1 1V24L6 19L9.500 26L13.500 24.500L10.500 18H17Z" fill="#fff" stroke="#1a2230" /></svg>
  </div>
</template>

<style>
html, body { margin: 0; overflow: hidden; }
</style>

<style scoped>
.screen { position: relative; width: 1920px; height: 1080px; overflow: hidden; display: flex; flex-direction: column; background: #efefef; font-family: "Open Sans", "Noto Sans CJK SC", sans-serif; font-size: 18px; color: #000; }
.defs { position: absolute; }
i, em { font-style: normal; flex: none; }
s { text-decoration: none; }
u { text-underline-offset: 2px; text-decoration-thickness: 1px; }
.screen > * { flex: none; }
svg { display: block; flex: none; overflow: visible; }

.title { position: relative; height: 31px; border-bottom: 2px solid #1c3658; display: flex; align-items: center; background: linear-gradient(90deg, #57759a 0, #3d6497 140px, #2a5790 250px, #245189 420px, #22598e 800px, #225386 1150px, #1d4474 1430px, #1d4673 1700px, #1d4877 1920px); box-shadow: inset 0 -1px #a9bdd2; }
.app-icon { width: 24px; height: 24px; }
.title-text { margin-left: 4px; font-size: 18.900px; letter-spacing: .05px; line-height: 29px; white-space: nowrap; padding-top: 1px; text-shadow: 0 0 8px #b9c8da, 0 0 12px #b9c8da, 0 0 14px #a9bbd0; }
.strip { position: absolute; left: 144px; top: 0; width: 1632px; height: 3px; background: #f2f6fb; }
.caption { position: absolute; left: 1758px; top: 0; height: 27px; display: flex; border: 1px solid #bfcddb; border-top: 0; border-radius: 0 0 6px 6px; overflow: hidden; box-shadow: 0 0 2px #0b1f3d; }
.cap { height: 27px; background: linear-gradient(#8496ad 0, #6e839f 12px, #23436d 13px, #40618c 27px); }
.min { width: 44px; border-right: 1px solid #b1bfce; }
.max { width: 40px; border-right: 1px solid #b1bfce; }
.close { width: 71px; background: linear-gradient(#c9817a 0, #c0605a 12px, #a01f1c 13px, #c34a35 27px); }
.cap svg { height: 26px; }

.menu { height: 38px; display: flex; align-items: center; padding-bottom: 2px; box-sizing: border-box; background: linear-gradient(90deg, #a3bff3 0, #b4cbf5 450px, #c4d8f8 850px, #c4d8f8); }
.grip { flex: none; width: 4px; height: 23px; margin-left: 8px; background: repeating-linear-gradient(#41598f 0 3px, transparent 3px 6px); background-size: 3px 100%; background-repeat: no-repeat; }
.menu .grip { margin-right: 11px; height: 21px; }
.menu-item { font-size: 18px; line-height: 26px; white-space: nowrap; flex: none; }
.menu-page { width: 24px; height: 24px; margin-right: 13px; }
.ask { margin-left: auto; width: 268px; height: 29px; background: #fff; display: flex; align-items: center; justify-content: space-between; }
.ask span { padding-left: 3px; color: #7b7b7b; font-size: 18px; line-height: 26px; }
.ask-drop { width: 17px; height: 27px; display: flex; align-items: center; justify-content: center; background: #c9dcf9; margin-right: 1px; }
.menu-x { width: 14px; height: 12px; margin: 0 9px 0 7px; }
.tri { width: 0; height: 0; border: 6px solid transparent; border-top-color: #000; border-bottom: 0; }

.bars { height: 37px; display: flex; background: #9fbcf2; border-bottom: 2px solid #8b929c; }
.bar { display: flex; align-items: center; height: 37px; padding-bottom: 2px; box-sizing: border-box; background: linear-gradient(#e0ebfd 0, #c8dcfa 16px, #a9c4f1 27px, #86a9e3 35px, #3e65ac 36px); border-radius: 4px 4px 6px 6px; }
.standard { margin-left: 4px; width: 499px; }
.standard .grip { margin: 0 1px 0 4px; }
.format { margin-left: 4px; flex: 1; }
.format .grip { margin: 0 2px 0 4px; }
.btn { width: 34px; height: 33px; box-sizing: border-box; display: flex; align-items: center; justify-content: center; flex: none; }
.btn svg { width: 24px; height: 24px; }
.btn.on { background: linear-gradient(#fdd08b, #fbaf5c); border: 1px solid #15157a; }
.sep { width: 1px; height: 22px; background: #6a8fd6; border-right: 1px solid #f4f8ff; margin: 0 2px; }
.drop { width: 17.500px; display: flex; justify-content: center; flex: none; }
.combo { height: 29px; flex: none; background: #fff; display: flex; align-items: center; justify-content: space-between; margin-top: 1px; }
.combo span { padding-left: 3px; line-height: 25px; padding-bottom: 2px; }
.combo b { width: 17px; height: 27px; margin-right: 1px; display: flex; align-items: center; justify-content: center; background: linear-gradient(#dce8fc, #9dbcf0); }
.label { flex: none; white-space: nowrap; font-size: 18px; line-height: 28px; }
.label + .drop .tri { border-width: 5px 5px 0; }
.end { margin-left: auto; width: 17px; height: 36px; align-self: flex-start; background: linear-gradient(#7fa2e3, #3a63b6 60%, #0d3185); border-radius: 0 4px 4px 0; flex: none; }
.end svg { width: 17px; height: 36px; }

.work { position: relative; height: 850px; border-left: 2px solid #8a8f98; display: grid; grid-template: 31px 791px 28px / 1890px 28px; background: #efefef; box-sizing: border-box; }
.hrow { background: #d9e6fc; }
.num { font: 12.500px "Liberation Sans", sans-serif; letter-spacing: -.6px; fill: #000; }
.mid { display: flex; grid-row: 2; }
.vruler { background: #d9e6fc; overflow: hidden; }
.canvas { flex: 1; background: #919aad; }
.paper { box-sizing: border-box; margin: 25px 0 0 333px; width: 1195px; height: 766px; padding-top: 160px; background: #976933; border: 1px solid #000; border-width: 1px 3px 0 1px; }
.caret { display: block; width: 1px; height: 26px; margin-left: 180px; background: #5f95d8; }
.hscroll { grid-row: 3; display: flex; align-items: flex-start; background: #efefef; border-top: 1px solid #fff; box-sizing: border-box; }
.views { width: 131px; }
.harrow { width: 26px; height: 25px; }
.l { width: 27px; }
.hthumb { width: 1702px; height: 21px; border: 1px solid #8f8f93; border-radius: 2px; background: linear-gradient(#f5f5f5 0, #e9e9ea 6px, #d5d5d7 7px, #cfcfd1 16px, #b9b9bc); display: flex; align-items: center; justify-content: center; gap: 2px; }
.hthumb i { width: 3px; height: 11px; background: linear-gradient(90deg, #55575b 0 1.500px, #f2f2f2 2px); }
.rarr { display: block; margin: 7px 0 0 12px; border: 5.500px solid transparent; border-left: 6px solid #444; border-right: 0; width: 0; }
.vscroll { grid-column: 2; grid-row: 1 / 4; display: flex; flex-direction: column; background: #f0f0f0; }
.vscroll > * { flex: none; }
.split { height: 10px; width: 23px; border: solid #777; border-width: 0 2px 2px 0; background: #f2f2f2; border-left: 1px solid #fff; }
.varrow { height: 28px; }
.uarr { display: block; width: 0; margin: 12px 0 0 9px; border: 5.500px solid transparent; border-bottom: 6px solid #444; border-top: 0; }
.darr { display: block; width: 0; border: 5.500px solid transparent; border-top: 6px solid #555; border-bottom: 0; margin: 0 0 0 9px; }
.uarr, .darr { position: static; }
.varrow:not(.d) { display: flex; align-items: flex-start; }
.vthumb { margin-left: 1px; width: 22px; height: 305px; border: 1px solid #8f8f93; border-radius: 2px; background: linear-gradient(90deg, #f5f5f5 0, #e9e9ea 6px, #d9d9db 7px, #d2d2d5 16px, #bdbdc0); display: flex; flex-direction: column; align-items: center; justify-content: center; gap: 2px; }
.vthumb i { width: 12px; height: 3px; background: linear-gradient(#606266 0 1.500px, #f4f4f4 2px); }
.d { margin-top: 381px; height: 15px; }

.drawrow { height: 39px; padding-top: 1px; border-bottom: 1px solid #909498; background: #c4d8f8; display: flex; box-sizing: border-box; }
.drawrow .bar { margin-left: 4px; width: 943px; height: 37px; }
.drawrow .grip { margin: 0 5px 0 4px; }

.status { height: 26px; background: #efefef; display: flex; align-items: flex-start; padding: 3px 0 0 5px; box-sizing: border-box; font-family: "Liberation Serif", "Noto Sans CJK SC", serif; font-size: 17px; border-bottom: 1px solid #41586e; }
.cell { box-sizing: border-box; height: 22px; border: 1px solid #d0d0d0; display: flex; align-items: center; white-space: pre; line-height: 20px; word-spacing: 3px; margin-right: 5px; flex: none; padding-left: 4px; }
.cell em { flex: none; }
.dim { color: #a9a9a9; padding-left: 3px; }
.c1 { width: 272px; }
.p1 { width: 86px; margin-left: 54px; }
.p2 { width: 69px; }
.c2 { width: 312px; }
.q1 { width: 210px; }
.q2 { width: 59px; }
.cell s { display: inline-block; width: 8.500px; }
.c3 { width: 43px; }
.c4 { width: 41px; }
.c5 { width: 95px; padding-left: 2px; }
.c5 s { text-align: center; }
.c6 { width: 58px; }
.c7 { width: 43px; }
.c8 { width: 27px; }
.c9 { width: 38px; }

.lang { position: absolute; left: 1789px; top: 990px; width: 131px; height: 34px; display: flex; align-items: center; background: linear-gradient(#7f868a 0, #b7bcbd 2px, #8e9394 10px, #5b6061 12px, #565b5c); }
.dots { width: 15px; height: 24px; margin-left: 4px; background: repeating-linear-gradient(90deg, #222 0 3px, transparent 3px 5px); -webkit-mask: repeating-linear-gradient(#000 0 4px, transparent 4px 10px); mask: repeating-linear-gradient(#000 0 4px, transparent 4px 10px); }
.ch { margin: 0 9px 0 9px; width: 18px; color: #fff; font: 17px/20px "Liberation Serif", serif; transform: scaleX(.76); transform-origin: left; }
.kbd { width: 24px; height: 20px; }
.help { margin-left: 9px; width: 18px; height: 18px; border: 1.500px solid #c3cdec; border-radius: 50%; background: #1a1ac4; color: #fff; font-weight: bold; font-size: 16px; line-height: 18px; text-align: center; margin-bottom: 4px; }
.lend { width: 8px; height: 20px; margin-left: 9px; }

.taskbar { position: relative; height: 55px; display: flex; align-items: center; background: linear-gradient(90deg, #246a9c 0, #2f80b2 90px, #3f9bc6 200px, #46a5d0 420px, #58b4d8 500px, #44a1cf 640px, #3791c8 800px, #2e7fc0 1050px, #2672b8 1300px, #2467ab 1555px, #1c4a7c 1592px, #1b4473 1750px, #163d68 1920px); box-shadow: inset 0 1px #8fb9d6; }
.wall { position: absolute; left: 0; top: 0; overflow: hidden; }
.ic { position: relative; width: 54px; height: 54px; }
.start { margin-left: 13px; }
.iesvg { margin-left: 30px; }
.folder { margin-left: 24px; }
.wmp { margin-left: 21px; }
.task { position: relative; box-sizing: border-box; width: 75px; height: 54px; margin-left: 15px; display: flex; align-items: center; justify-content: center; border: 1px solid #1e5c7e; border-radius: 3px; background: linear-gradient(135deg, #a4d5ea, #6db6d6 50%, #86c7e0); box-shadow: inset 0 0 0 1px #c4e5f1; }
.active { margin-left: 3px; background: linear-gradient(135deg, #e2f3fa, #b4ddec 60%, #c9eaf4); box-shadow: inset 0 0 0 1px #f2fbfe; }
.task svg { width: 54px; height: 54px; margin: 0 2px 1px 0; }
.tray { position: relative; margin-left: auto; display: flex; align-items: center; height: 55px; color: #fff; }
.t-up { width: 12px; height: 8px; margin-right: 23px; }
.tray svg:nth-child(n+2) { width: 24px; height: 26px; }
.t-off { margin-right: 19px; }
.t-flag { margin-right: 12px; }
.t-net { margin-right: 11px; }
.clock { width: 112px; margin-left: 10px; display: flex; flex-direction: column; align-items: center; font-size: 18.800px; line-height: 25px; margin-top: 2px; }
.peek { width: 12px; height: 52px; border: 1px solid #6d93b5; background: linear-gradient(#5d7f9f, #22486f 40%, #1b4068); margin-left: 2px; }
.mouse { position: absolute; left: 1639px; top: 0; }
</style>
